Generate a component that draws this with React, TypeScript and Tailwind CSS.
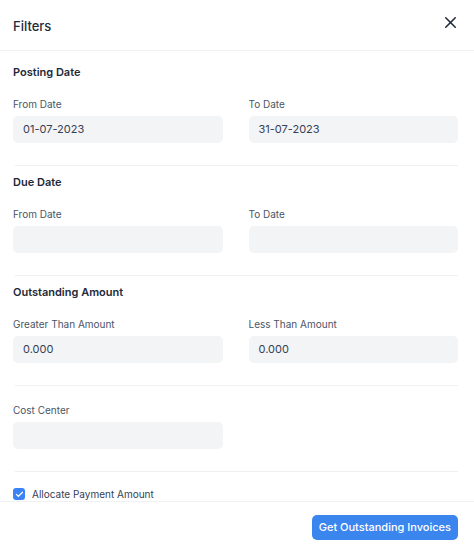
import { X, Check } from 'lucide-react';

function Field({ label, value }: { label: string; value?: string }) {
  return (
    <div className="flex flex-col">
      <div className="h-4 text-[10px] leading-4 text-gray-600">{label}</div>
      <div className="mt-1 flex h-[27px] items-center rounded-[5px] bg-[#f3f4f6] px-[10px] text-[11px] text-gray-700">
        {value}
      </div>
    </div>
  );
}

function Divider() {
  return <div className="ml-[2px] border-t border-[#eef0f2]" />;
}

export default function App() {
  return (
    <div
      className="flex h-[548px] w-[474px] flex-col bg-white"
      style={{ fontFamily: 'Inter, "Liberation Sans", sans-serif' }}
    >
      {/* header */}
      <div className="flex h-[51px] shrink-0 items-center justify-between border-b border-[#f0f1f3] pl-[13px] pr-[14px]">
        <div className="mt-[3px] text-[13px] font-medium text-gray-800">Filters</div>
        <X className="-mt-[6px] h-[19px] w-[19px] text-gray-800" strokeWidth={1.9} />
      </div>

      {/* body */}
      <div className="flex-1 overflow-hidden pl-[13px] pr-[16px]">
        <div className="pt-[13px] pb-[22px]">
          <div className="text-[11px] font-semibold leading-4 text-gray-800">Posting Date</div>
          <div className="mt-4 grid grid-cols-2 gap-[26px]">
            <Field label="From Date" value="01-07-2023" />
            <Field label="To Date" value="31-07-2023" />
          </div>
        </div>
        <Divider />
        <div className="pt-[8px] pb-[22px]">
          <div className="text-[11px] font-semibold leading-4 text-gray-800">Due Date</div>
          <div className="mt-4 grid grid-cols-2 gap-[26px]">
            <Field label="From Date" />
            <Field label="To Date" />
          </div>
        </div>
        <Divider />
        <div className="pt-[8px] pb-[22px]">
          <div className="text-[11px] font-semibold leading-4 text-gray-800">Outstanding Amount</div>
          <div className="mt-4 grid grid-cols-2 gap-[26px]">
            <Field label="Greater Than Amount" value="0.000" />
            <Field label="Less Than Amount" value="0.000" />
          </div>
        </div>
        <Divider />
        <div className="pt-4 pb-[22px]">
          <div className="grid grid-cols-2 gap-[26px]">
            <Field label="Cost Center" />
          </div>
        </div>
        <Divider />
        <div className="flex items-center gap-[7px] pt-[15px]">
          <div className="flex h-3 w-3 items-center justify-center rounded-[3px] bg-[#3b82f6]">
            <Check className="h-[9px] w-[9px] text-white" strokeWidth={3.5} />
          </div>
          <div className="text-[10px] leading-[14px] text-gray-700">Allocate Payment Amount</div>
        </div>
      </div>

      {/* footer */}
      <div className="flex h-[47px] shrink-0 items-start justify-end border-t border-[#f0f1f3] pr-[16px] pt-[13px]">
        <button className="h-[25px] rounded-[5px] bg-[#3b85ef] px-[7px] text-[11px] font-medium text-white">
          Get Outstanding Invoices
        </button>
      </div>
    </div>
  );
}
